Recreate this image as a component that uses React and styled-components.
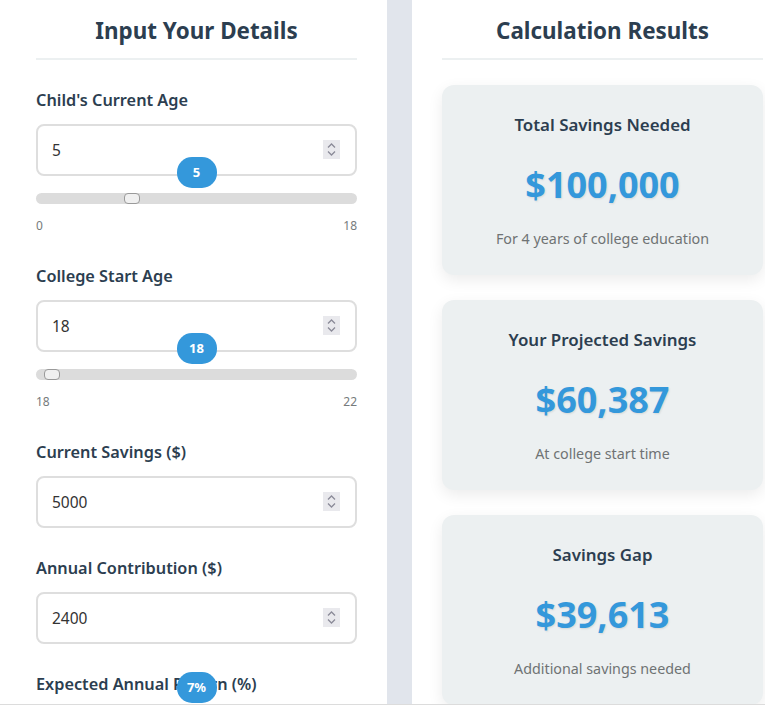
import styled, { createGlobalStyle } from "styled-components";

const GlobalStyle = createGlobalStyle`
  body {
    margin: 0;
    background: #ffffff;
    font-family: "Noto Sans", "Open Sans", Arial, sans-serif;
  }
  * { box-sizing: border-box; }
`;

const Page = styled.div`
  display: flex;
  gap: 25px;
  height: 705px;
  overflow: hidden;
  background: #e1e5ec;
  border-bottom: 1px solid #dcdcdc;
`;

const Panel = styled.section`
  background: #ffffff;
  padding: 14px ${(p) => p.$right}px 0 ${(p) => p.$left}px;
  ${(p) => (p.$fixed ? `flex: 0 0 ${p.$fixed}px;` : "flex: 1;")}
`;

const Heading = styled.h2`
  margin: 0 0 ${(p) => p.$gap}px;
  padding-bottom: 10px;
  border-bottom: 2px solid #ecf0f1;
  text-align: center;
  font-size: 22.4px;
  line-height: 33.6px;
  font-weight: 700;
  color: #2c3e50;
`;

const Field = styled.div`
  margin-bottom: ${(p) => p.$gap}px;
`;

const Label = styled.label`
  display: block;
  margin-bottom: 12px;
  font-size: 16.3px;
  line-height: 24px;
  font-weight: 600;
  color: #2c3e50;
`;

const InputBox = styled.div`
  display: flex;
  align-items: center;
  height: 52px;
  padding: 0 15px 0 14px;
  border: 2px solid #dedede;
  border-radius: 8px;
  background: #fff;
`;

const NumberInput = styled.input`
  flex: 1;
  min-width: 0;
  border: none;
  outline: none;
  padding: 0;
  font-family: inherit;
  font-size: 15.5px;
  color: #333;
  background: transparent;
  -moz-appearance: textfield;
  &::-webkit-inner-spin-button,
  &::-webkit-outer-spin-button {
    -webkit-appearance: none;
    margin: 0;
  }
`;

const Spinner = styled.span`
  display: flex;
  align-items: center;
  justify-content: center;
  width: 17px;
  height: 19px;
  background: #e9e9ed;
`;

const Track = styled.div`
  position: relative;
  margin-top: ${(p) => p.$top}px;
  height: 11px;
  padding: 0 8px;
  border-radius: 6px;
  background: #dcdcdc;
`;

const Range = styled.input`
  display: block;
  width: 100%;
  height: 11px;
  margin: 0;
  background: transparent;
  -webkit-appearance: none;
  appearance: none;
  &::-webkit-slider-thumb {
    -webkit-appearance: none;
    width: 16px;
    height: 11px;
    border: 1px solid #9a9a9a;
    border-radius: 4px;
    background: #f0f0f0;
  }
`;

const Badge = styled.span`
  position: absolute;
  left: 50%;
  bottom: calc(100% + 5px);
  transform: translateX(-50%);
  min-width: 40px;
  height: 31px;
  padding: 0 8px;
  display: flex;
  align-items: center;
  justify-content: center;
  border-radius: 15px;
  background: #3498db;
  color: #fff;
  font-size: 13px;
  font-weight: 700;
`;

const Scale = styled.div`
  display: flex;
  justify-content: space-between;
  margin-top: 14px;
  font-size: 12px;
  line-height: 16px;
  color: #767b7c;
`;

const Cards = styled.div`
  display: flex;
  flex-direction: column;
  gap: 25px;
`;

const Card = styled.div`
  padding: 28px 20px 26px;
  border-radius: 12px;
  background: #ecf0f1;
  box-shadow: 0 5px 15px rgba(0, 0, 0, 0.08);
  text-align: center;
`;

const CardTitle = styled.h3`
  margin: 0 0 26px;
  font-size: 16.9px;
  line-height: 24px;
  font-weight: 600;
  color: #2c3e50;
`;

const CardValue = styled.div`
  margin-bottom: 21px;
  font-size: 36px;
  line-height: 44px;
  font-weight: 700;
  color: #3498db;
  text-shadow: 1px 1px 2px rgba(0, 0, 0, 0.1);
`;

const CardNote = styled.p`
  margin: 0;
  font-size: 14.3px;
  line-height: 21px;
  color: #6f7374;
`;

function SpinIcon() {
  return (
    <Spinner>
      <svg width="11" height="15" viewBox="0 0 11 15" fill="none" stroke="#8b8b98" strokeWidth="1.3">
        <path d="M2 5.5 L5.5 2 L9 5.5" />
        <path d="M2 9.5 L5.5 13 L9 9.5" />
      </svg>
    </Spinner>
  );
}

function Slider({ min, max, value, badge, top = 17 }) {
  return (
    <>
      <Track $top={top}>
        <Badge>{badge}</Badge>
        <Range type="range" min={min} max={max} defaultValue={value} />
      </Track>
      <Scale>
        <span>{min}</span>
        <span>{max}</span>
      </Scale>
    </>
  );
}

const fields = [
  { label: "Child's Current Age", value: 5, slider: { min: 0, max: 18, badge: "5" } },
  { label: "College Start Age", value: 18, slider: { min: 18, max: 22, badge: "18" } },
  { label: "Current Savings ($)", value: 5000 },
  { label: "Annual Contribution ($)", value: 2400 },
];

const results = [
  { title: "Total Savings Needed", value: "$100,000", note: "For 4 years of college education" },
  { title: "Your Projected Savings", value: "$60,387", note: "At college start time" },
  { title: "Savings Gap", value: "$39,613", note: "Additional savings needed" },
];

export default function App() {
  return (
    <>
      <GlobalStyle />
      <Page>
        <Panel $fixed={387} $left={36} $right={30}>
          <Heading $gap={28}>Input Your Details</Heading>
          {fields.map((f) => (
            <Field key={f.label} $gap={f.slider ? 30 : 28}>
              <Label>{f.label}</Label>
              <InputBox>
                <NumberInput type="number" defaultValue={f.value} />
                <SpinIcon />
              </InputBox>
              {f.slider && <Slider {...f.slider} value={f.value} />}
            </Field>
          ))}
          <Field $gap={29}>
            <Label>Expected Annual Return (%)</Label>
            <Slider min={1} max={12} value={7} badge="7%" top={10} />
          </Field>
        </Panel>
        <Panel $left={30} $right={2}>
          <Heading $gap={25}>Calculation Results</Heading>
          <Cards>
            {results.map((r) => (
              <Card key={r.title}>
                <CardTitle>{r.title}</CardTitle>
                <CardValue>{r.value}</CardValue>
                <CardNote>{r.note}</CardNote>
              </Card>
            ))}
          </Cards>
        </Panel>
      </Page>
    </>
  );
}
